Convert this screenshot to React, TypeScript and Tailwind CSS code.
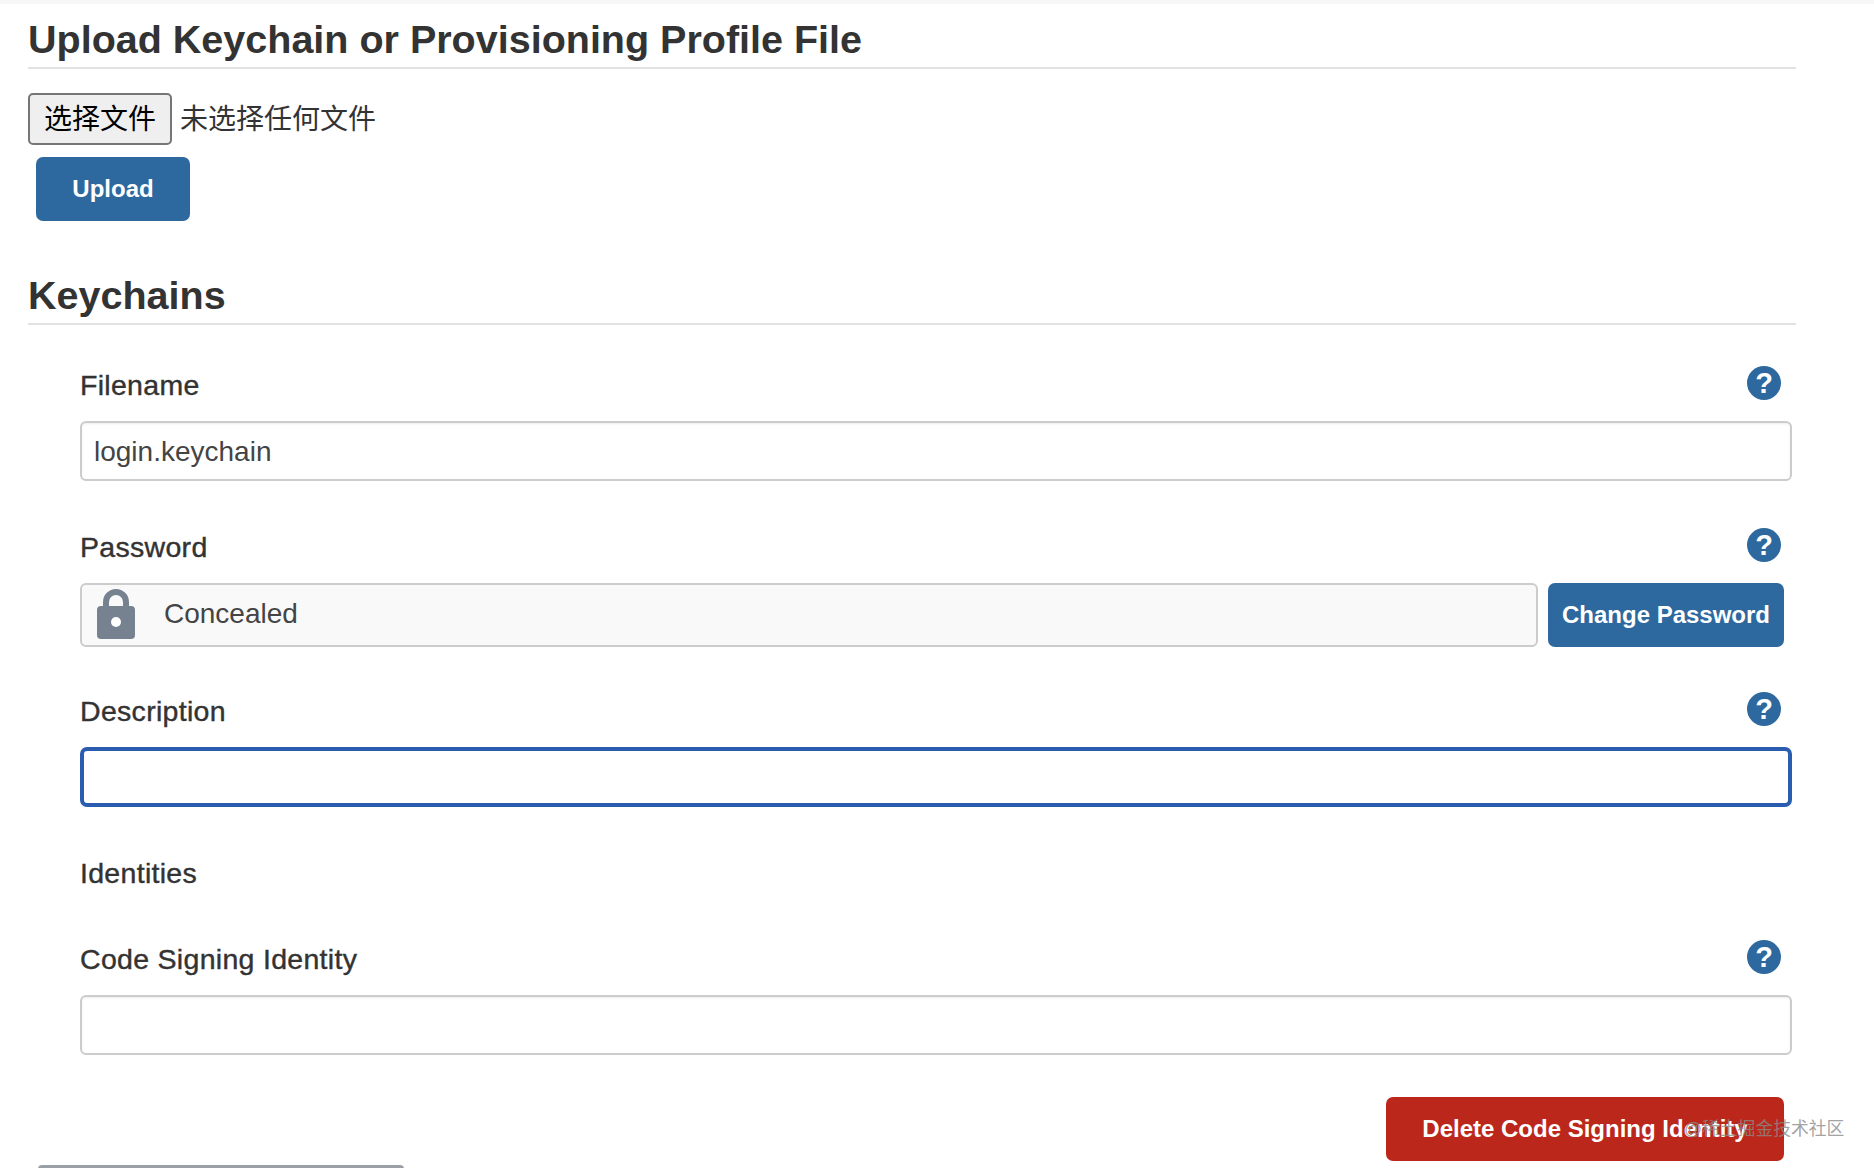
const sans = "font-['Liberation_Sans','Noto_Sans_CJK_SC',sans-serif]";

function Help() {
  return (
    <div className="flex h-[34px] w-[34px] items-center justify-center rounded-full bg-[#2d699e] text-[29px] font-bold leading-none text-white">
      ?
    </div>
  );
}

function Label({ text, help = true }: { text: string; help?: boolean }) {
  return (
    <div className="flex h-[34px] items-center justify-between pr-[11px]">
      <span className="mt-[4px] text-[28.5px] leading-none tracking-[0.3px] text-[#333] [-webkit-text-stroke:0.4px_#333]">{text}</span>
      {help && <Help />}
    </div>
  );
}

function TextBox({ value = "", focused = false }: { value?: string; focused?: boolean }) {
  return (
    <div
      className={
        focused
          ? "h-[60px] rounded-[7px] border-4 border-[#2a5db0] bg-white"
          : "flex h-[60px] items-center rounded-[6px] border-2 border-[#ccc] bg-white px-[12px] pt-[1px] text-[28px] text-[#444] shadow-[inset_0_1px_2px_rgba(0,0,0,0.08)]"
      }
    >
      {value}
    </div>
  );
}

function LockIcon() {
  return (
    <svg width="38" height="50" viewBox="0 0 38 50" className="mb-[2px] shrink-0">
      <path d="M9 22V13a10 10 0 0 1 20 0v9" fill="none" stroke="#76828f" strokeWidth="6" />
      <rect x="0" y="17" width="38" height="33" rx="4" fill="#76828f" />
      <circle cx="19" cy="33" r="5" fill="#fff" />
    </svg>
  );
}

export default function App() {
  return (
    <div className={`relative h-[1168px] w-[1874px] overflow-hidden border-t-4 border-[#f7f7f7] bg-white ${sans}`}>
      <div className="w-[1796px] pl-[28px]">
        <h2 className="h-[65px] border-b-2 border-[#e2e2e2] pt-[12px] text-[39.5px] leading-[46px] font-bold text-[#333]">
          Upload Keychain or Provisioning Profile File
        </h2>
        <div className="mt-[24px] flex items-center gap-[8px]">
          <button className="h-[52px] w-[144px] rounded-[5px] border-2 border-[#767676] bg-[#efefef] pt-[1px] text-[28px] text-black">
            选择文件
          </button>
          <span className="mt-[2px] text-[28px] text-[#333]">未选择任何文件</span>
        </div>
        <button className="mt-[12px] ml-[8px] h-[64px] w-[154px] rounded-[7px] bg-[#2d699e] text-[24px] font-bold text-white">
          Upload
        </button>

        <h2 className="mt-[51px] h-[53px] border-b-2 border-[#e2e2e2] text-[39.5px] leading-[46px] font-bold text-[#333]">
          Keychains
        </h2>

        <div className="mt-[41px] flex w-[1764px] flex-col pl-[52px]">
          <Label text="Filename" />
          <div className="mt-[21px]">
            <TextBox value="login.keychain" />
          </div>

          <div className="mt-[47px]">
            <Label text="Password" />
          </div>
          <div className="mt-[21px] flex items-center pr-[8px]">
            <div className="flex h-[64px] flex-1 items-center gap-[29px] rounded-[6px] border-2 border-[#ccc] bg-[#f9f9f9] pl-[15px] text-[28px] text-[#444]">
              <LockIcon />
              <span className="mb-[2px]">Concealed</span>
            </div>
            <button className="ml-[10px] h-[64px] w-[236px] rounded-[7px] bg-[#2d699e] text-[24px] font-bold text-white">
              Change Password
            </button>
          </div>

          <div className="mt-[45px]">
            <Label text="Description" />
          </div>
          <div className="mt-[21px]">
            <TextBox focused />
          </div>

          <div className="mt-[47px]">
            <Label text="Identities" help={false} />
          </div>

          <div className="mt-[52px]">
            <Label text="Code Signing Identity" />
          </div>
          <div className="mt-[21px]">
            <TextBox />
          </div>

          <div className="mt-[42px] flex justify-end pr-[8px]">
            <button className="h-[64px] w-[398px] rounded-[7px] bg-[#bb271a] text-[24px] font-bold text-white">
              Delete Code Signing Identity
            </button>
          </div>
        </div>

        <div className="mt-[4px] ml-[10px] h-[4px] w-[366px] rounded-t-[4px] bg-[#9aa0a6]" />
      </div>

      <span className="absolute top-[1112px] left-[1684px] text-[17.8px] text-[#8a8a8a]/80">@稀土掘金技术社区</span>
    </div>
  );
}
